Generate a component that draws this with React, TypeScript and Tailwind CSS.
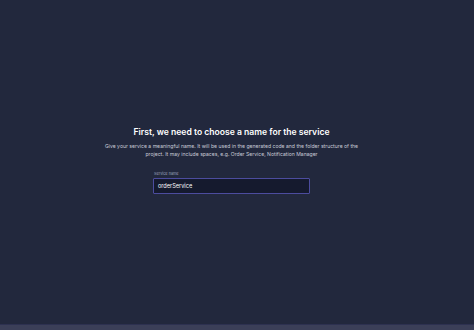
export default function App() {
    return (
        <div className="w-[474px] h-[330px] bg-[#22283d] flex flex-col font-['Inter',sans-serif]">
            <main className="flex-1 flex flex-col items-center pt-[127px] pr-[11px]">
                <h1 className="text-[8.6px] font-semibold text-white leading-[11px]">
                    First, we need to choose a name for the service
                </h1>
                <p className="mt-[4px] w-[268px] text-center text-[5.1px] leading-[8px] text-[#c9ccd8]">
                    Give your service a meaningful name. It will be used in the generated code and the folder structure of the project. It may include spaces, e.g. Order Service, Notification Manager
                </p>
                <div className="mt-[13px] w-[157px] flex flex-col">
                    <label className="text-[3.8px] leading-[5px] text-[#9aa0b8] ml-px">Service name</label>
                    <div className="mt-[2px] h-[16px] bg-[#151a2e] border border-[#4c4c9e] rounded-[1px] flex items-center px-[4px]">
                        <span className="text-[5.6px] text-white">orderService</span>
                    </div>
                </div>
            </main>
            <footer className="h-[6px] bg-[#3b3f58] border-t border-[#2d3150]" />
        </div>
    );
}
